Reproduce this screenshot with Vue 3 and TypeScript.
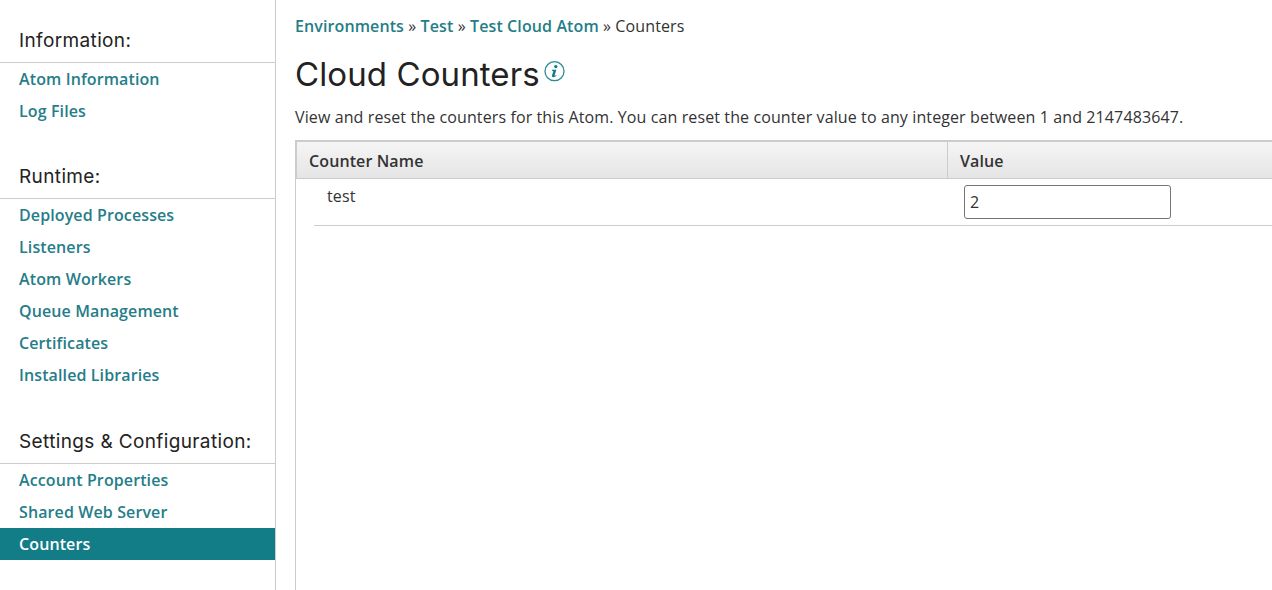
<script setup lang="ts">
const sections = [
  { title: 'Information:', items: ['Atom Information', 'Log Files'] },
  { title: 'Runtime:', items: ['Deployed Processes', 'Listeners', 'Atom Workers', 'Queue Management', 'Certificates', 'Installed Libraries'] },
  { title: 'Settings & Configuration:', items: ['Account Properties', 'Shared Web Server', 'Counters'] },
]
const active = 'Counters'
</script>

<template>
  <div class="page">
    <aside class="side">
      <section v-for="s in sections" :key="s.title" class="sec">
        <h3 class="sec-title">{{ s.title }}</h3>
        <a v-for="i in s.items" :key="i" class="item" :class="{ on: i === active }">{{ i }}</a>
      </section>
    </aside>
    <main class="main">
      <nav class="crumbs"><a>Environments</a> » <a>Test</a> » <a>Test Cloud Atom</a> » Counters</nav>
      <div class="title-row">
        <h1 class="title">Cloud Counters</h1>
        <svg class="info" width="21" height="21" viewBox="0 0 21 21">
          <circle cx="10.5" cy="10.2" r="9.5" fill="none" stroke="#2a8a94" stroke-width="1.3" />
          <circle cx="11.8" cy="5.6" r="1.7" fill="#127c87" />
          <path d="M7.8 8.8h4.5l-1.7 5.7c-.1.3.2.4.5.2l1-.7.4.5c-.9 1.1-2 1.7-3.1 1.7-1.2 0-1.6-.7-1.4-1.6l1.2-4c.1-.4 0-.6-.9-.6z" fill="#127c87" />
        </svg>
      </div>
      <p class="desc">View and reset the counters for this Atom. You can reset the counter value to any integer between 1 and 2147483647.</p>
      <div class="panel">
        <div class="thead">
          <div class="th name">Counter Name</div>
          <div class="th val">Value</div>
        </div>
        <div class="row">
          <div class="cell-name">test</div>
          <div class="cell-val"><input class="input" value="2" /></div>
        </div>
      </div>
    </main>
  </div>
</template>

<style>
html, body { margin: 0; background: #fff; overflow: hidden; }
</style>

<style scoped>
.page {
  display: flex;
  height: 590px;
  width: 1272px;
  overflow: hidden;
  font-family: "Open Sans", "Noto Sans", sans-serif;
  font-size: 16px;
  letter-spacing: 0.11px;
  color: #333;
}
.side {
  width: 275px;
  flex: none;
  border-right: 1px solid #ccc;
  padding-top: 19px;
  box-sizing: content-box;
}
.sec { margin-bottom: 28px; }
.sec:nth-child(2) { margin-bottom: 29px; }
.sec-title {
  margin: 0;
  height: 44px;
  box-sizing: border-box;
  padding: 10px 0 0 19px;
  line-height: 24px;
  font-family: Inter, "Open Sans", sans-serif;
  font-weight: 400;
  font-size: 19px;
  letter-spacing: 0.37px;
  color: #222;
  border-bottom: 1px solid #ccc;
}
.item {
  display: block;
  height: 32px;
  line-height: 32px;
  padding-left: 19px;
  font-weight: 600;
  color: #257d88;
}
.item.on { background: #127c87; color: #fff; }
.main {
  flex: 1;
  min-width: 0;
  padding-left: 19px;
  display: flex;
  flex-direction: column;
}
.crumbs { margin-top: 15px; line-height: 22px; white-space: nowrap; }
.crumbs a { color: #257d88; font-weight: 600; }
.title-row { display: flex; align-items: flex-start; margin-top: 14px; height: 46px; }
.title {
  margin: 0;
  font-family: Inter, "Open Sans", sans-serif;
  font-weight: 400;
  font-size: 33px;
  letter-spacing: 0.1px;
  line-height: 46px;
  color: #222;
}
.info { margin: 10px 0 0 4px; }
.desc { margin: 9px 0 0; line-height: 22px; white-space: nowrap; }
.panel {
  margin-top: 12px;
  flex: 1;
  border-left: 1px solid #ccc;
}
.thead {
  display: flex;
  height: 39px;
  box-sizing: border-box;
  border-left: 1px solid #ccc;
  border-top: 2px solid #ccc;
  border-bottom: 1px solid #ccc;
  background: linear-gradient(#f5f5f5, #e5e5e5);
  font-weight: 600;
}
.th { line-height: 38px; box-sizing: border-box; }
.name { width: 651px; padding-left: 12px; border-right: 1px solid #ccc; }
.val { padding-left: 12px; flex: 1; }
.row {
  display: flex;
  margin-left: 18px;
  height: 47px;
  border-bottom: 1px solid #ccc;
  box-sizing: border-box;
}
.cell-name { width: 634px; padding-left: 13px; padding-top: 6px; line-height: 22px; }
.cell-val { padding: 6px 0 0 16px; margin-left: -13px; }
.input {
  display: block;
  width: 207px;
  height: 34px;
  box-sizing: border-box;
  border: 1px solid #767676;
  border-radius: 3px;
  padding: 0 5px;
  font: 16px "Open Sans", sans-serif;
  color: #333;
  background: #fff;
}
</style>
